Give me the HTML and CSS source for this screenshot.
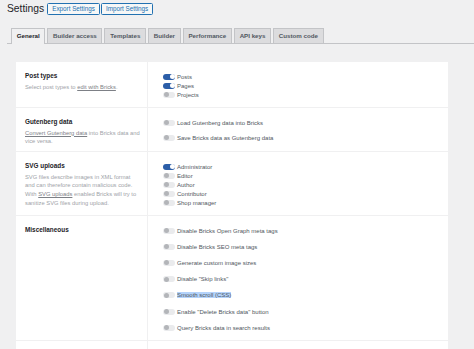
FILE: index.html
```html
<!DOCTYPE html>
<html lang="en">
<head>
    <meta charset="UTF-8">
    <meta name="viewport" content="width=device-width, initial-scale=1.0">
    <title>Settings</title>
<link rel="stylesheet" href="styles.css">
</head>
<body>

<div id="wrap">

<div class="page-head">
    <h1>Settings</h1>
    <a class="head-btn" href="#">Export Settings</a>
    <a class="head-btn" href="#">Import Settings</a>
</div>

<div class="nav-tabs">
    <a class="tab active" href="#general">General</a>
    <a class="tab" href="#builder-access">Builder access</a>
    <a class="tab" href="#templates">Templates</a>
    <a class="tab" href="#builder">Builder</a>
    <a class="tab" href="#performance">Performance</a>
    <a class="tab" href="#api-keys">API keys</a>
    <a class="tab" href="#custom-code">Custom code</a>
</div>

<div class="settings-card">

    <div class="row">
        <div class="label-col">
            <div class="title">Post types</div>
            <p class="desc">Select post types to <a href="#">edit with Bricks</a>.</p>
        </div>
        <div class="opt-col">
            <ul class="opts">
                <li><span class="toggle on"></span>Posts</li>
                <li><span class="toggle on"></span>Pages</li>
                <li><span class="toggle"></span>Projects</li>
            </ul>
        </div>
    </div>

    <div class="row">
        <div class="label-col">
            <div class="title">Gutenberg data</div>
            <p class="desc"><a href="#">Convert Gutenberg data</a> into Bricks data and vice versa.</p>
        </div>
        <div class="opt-col">
            <ul class="opts spaced g6">
                <li><span class="toggle"></span>Load Gutenberg data into Bricks</li>
                <li><span class="toggle"></span>Save Bricks data as Gutenberg data</li>
            </ul>
        </div>
    </div>

    <div class="row">
        <div class="label-col">
            <div class="title">SVG uploads</div>
            <p class="desc">SVG files describe images in XML format and can therefore contain malicious code. With <a href="#">SVG uploads</a> enabled Bricks will try to sanitize SVG files during upload.</p>
        </div>
        <div class="opt-col">
            <ul class="opts">
                <li><span class="toggle on"></span>Administrator</li>
                <li><span class="toggle"></span>Editor</li>
                <li><span class="toggle"></span>Author</li>
                <li><span class="toggle"></span>Contributor</li>
                <li><span class="toggle"></span>Shop manager</li>
            </ul>
        </div>
    </div>

    <div class="row">
        <div class="label-col">
            <div class="title">Miscellaneous</div>
        </div>
        <div class="opt-col">
            <ul class="opts spaced">
                <li><span class="toggle"></span>Disable Bricks Open Graph meta tags</li>
                <li><span class="toggle"></span>Disable Bricks SEO meta tags</li>
                <li><span class="toggle"></span>Generate custom image sizes</li>
                <li><span class="toggle"></span>Disable "Skip links"</li>
                <li><span class="toggle"></span><span class="selected">Smooth scroll (CSS)</span></li>
                <li><span class="toggle"></span>Enable "Delete Bricks data" button</li>
                <li><span class="toggle"></span>Query Bricks data in search results</li>
            </ul>
        </div>
    </div>

    <div class="row empty">
        <div class="label-col"></div>
        <div class="opt-col"></div>
    </div>

</div>

</div>

</body>
</html>
```

FILE: styles.css
```css
body {
    margin: 0;
    background-color: #f0f0f1;
    font-family: "Liberation Sans", Arial, sans-serif;
    color: #3c434a;
}
#wrap {
    padding: 3px 0 0 7px;
}
.page-head {
    display: flex;
    align-items: center;
    height: 12px;
}
.page-head h1 {
    margin: 0 3px 0 0;
    font-size: 10.3px;
    font-weight: 400;
    color: #1d2327;
    line-height: 12px;
}
.head-btn {
    display: block;
    box-sizing: border-box;
    height: 12px;
    line-height: 10px;
    padding: 0 4px;
    margin-right: 1px;
    font-size: 6.3px;
    color: #2271b1;
    text-decoration: none;
    background-color: #f6f7f7;
    border: 1px solid #2271b1;
    border-radius: 1.5px;
}
.nav-tabs {
    display: flex;
    margin-top: 13px;
    padding-left: 4px;
    height: 15px;
    border-bottom: 1px solid #c3c4c7;
}
.tab {
    display: block;
    box-sizing: border-box;
    height: 15px;
    line-height: 14px;
    padding: 0 4.7px;
    margin-right: 2px;
    font-size: 6.2px;
    font-weight: bold;
    color: #50575e;
    text-decoration: none;
    background-color: #dcdcde;
    border: 1px solid #c3c4c7;
    border-bottom: none;
}
.tab.active {
    color: #1d2327;
    background-color: #f0f0f1;
    height: 16px;
}
.settings-card {
    margin: 18px 26px 0 9px;
    background-color: #fff;
}
.row {
    display: grid;
    grid-template-columns: 132px 1fr;
    border-bottom: 1px solid #f0f0f1;
}
.row.empty {
    height: 30px;
}
.label-col {
    padding: 9.5px 6px 5px 9px;
    border-right: 1px solid #f0f0f1;
}
.title {
    font-size: 6.4px;
    line-height: 7px;
    font-weight: bold;
    color: #1d2327;
}
.desc {
    margin: 4px 0 0;
    font-size: 5.8px;
    line-height: 8.8px;
    color: #a0a3a8;
}
.desc a {
    color: #7d8086;
}
.opt-col {
    padding: 10px 15px 8px;
}
.opts {
    margin: 0;
    padding: 0;
    list-style: none;
    display: flex;
    flex-direction: column;
}
.opts li {
    display: flex;
    align-items: center;
    height: 9px;
    font-size: 6px;
    color: #50575e;
}
.opts.spaced {
    gap: 7.2px;
}
.opts.spaced.g6 {
    gap: 6px;
}
.toggle {
    position: relative;
    display: block;
    width: 12px;
    height: 6px;
    margin-right: 2px;
    border-radius: 3px;
    background-color: #eaebed;
}
.toggle::after {
    content: "";
    position: absolute;
    top: 0.5px;
    left: 0.5px;
    width: 5px;
    height: 5px;
    border-radius: 50%;
    background-color: #b3b5b9;
}
.toggle.on {
    background-color: #2c5ea8;
}
.toggle.on::after {
    left: 6.5px;
    background-color: #fff;
}
.selected {
    background-color: #b4d3fb;
}
```
